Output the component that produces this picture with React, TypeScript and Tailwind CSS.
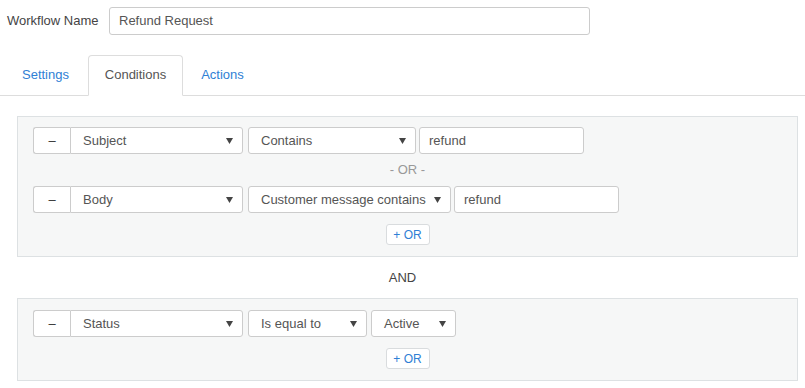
import React from 'react';

const Caret = () => (
  <svg width="7" height="6" viewBox="0 0 7 6" className="shrink-0">
    <path d="M0 0h7L3.5 6z" fill="#444" />
  </svg>
);

const Select = ({ label, w, ml = '', rounded = 'rounded-[3px]' }: { label: string; w: string; ml?: string; rounded?: string }) => (
  <div
    className={`flex h-[27px] items-center justify-between border border-[#ccc] bg-white pl-[12px] pr-[9px] text-[#555] ${w} ${ml} ${rounded}`}
  >
    <span>{label}</span>
    <Caret />
  </div>
);

const TextBox = ({ value, w, ml }: { value: string; w: string; ml: string }) => (
  <div className={`flex h-[27px] items-center rounded-[3px] border border-[#ccc] bg-white px-[9px] text-[#555] ${w} ${ml}`}>
    {value}
  </div>
);

const Minus = () => (
  <div className="flex h-[27px] w-[37px] items-center justify-center rounded-l-[3px] border border-r-0 border-[#ccc] bg-white text-[#333]">
    –
  </div>
);

const AddOr = () => (
  <div className="mt-[11px] flex justify-center">
    <div className="flex h-[21px] w-[44px] items-center justify-center rounded-[3px] border border-[#d9dcde] bg-white text-[12px] text-[#2f80d5]">
      + OR
    </div>
  </div>
);

export default function App() {
  return (
    <div className="min-h-[388px] bg-white text-[13px] text-[#555]" style={{ fontFamily: '"Liberation Sans", Arial, sans-serif' }}>
      <div className="flex items-center pl-[7px] pt-[7px]">
        <label className="w-[102px] text-[#444]">Workflow Name</label>
        <div className="flex h-[28px] w-[481px] items-center rounded-[3px] border border-[#ccc] px-[9px] text-[#555]">
          Refund Request
        </div>
      </div>

      <div className="mt-[20px] flex border-b border-[#ddd] pl-[5px]">
        <div className="flex h-[40px] w-[81px] items-center justify-center text-[#2f80d5]">Settings</div>
        <div className="-mb-px ml-[2px] flex h-[41px] w-[95px] items-center justify-center rounded-t-[4px] border border-b-white border-[#ddd] bg-white pb-px text-[#555]">
          Conditions
        </div>
        <div className="ml-[2px] flex h-[40px] w-[75px] items-center justify-center text-[#2f80d5]">Actions</div>
      </div>

      <div className="ml-[17px] mr-[7px] mt-[20px] border border-[#dde1e3] bg-[#f6f7f7] px-[15px] pb-[11px] pt-[10px]">
        <div className="flex items-center">
          <Minus />
          <Select label="Subject" w="w-[173px]" rounded="rounded-r-[3px]" />
          <Select label="Contains" w="w-[168px]" ml="ml-[5px]" />
          <TextBox value="refund" w="w-[165px]" ml="ml-[3px]" />
        </div>
        <div className="flex h-[32px] items-center justify-center text-[#999]">- OR -</div>
        <div className="flex items-center">
          <Minus />
          <Select label="Body" w="w-[173px]" rounded="rounded-r-[3px]" />
          <Select label="Customer message contains" w="w-[203px]" ml="ml-[5px]" />
          <TextBox value="refund" w="w-[165px]" ml="ml-[3px]" />
        </div>
        <AddOr />
      </div>

      <div className="flex h-[41px] items-center justify-center text-[#444]">AND</div>

      <div className="ml-[17px] mr-[7px] border border-[#dde1e3] bg-[#f6f7f7] px-[15px] pb-[11px] pt-[11px]">
        <div className="flex items-center">
          <Minus />
          <Select label="Status" w="w-[173px]" rounded="rounded-r-[3px]" />
          <Select label="Is equal to" w="w-[119px]" ml="ml-[5px]" />
          <Select label="Active" w="w-[85px]" ml="ml-[4px]" />
        </div>
        <AddOr />
      </div>
    </div>
  );
}
